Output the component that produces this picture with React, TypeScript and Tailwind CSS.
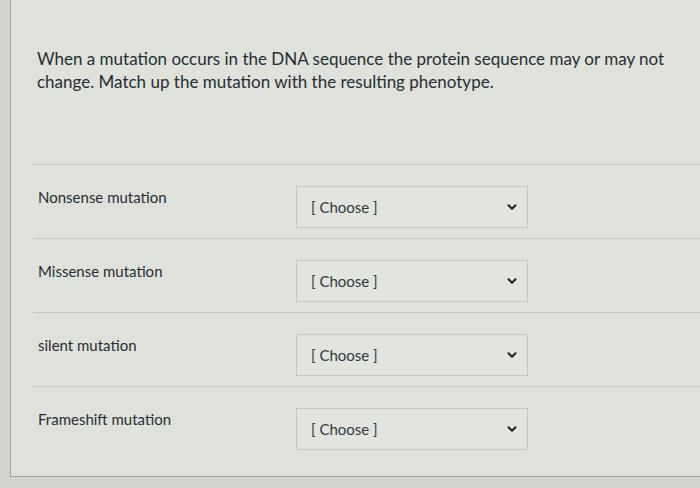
import { ChevronDown } from 'lucide-react';

const rows = ['Nonsense mutation', 'Missense mutation', 'silent mutation', 'Frameshift mutation'];

function ChooseSelect() {
  return (
    <div className="mt-[21px] flex h-[42px] w-[232px] items-center justify-between border border-[#c3c7c0] bg-[#e2e5de] pl-[14px] pr-[8px] text-[15px] text-[#2f3a3f]">
      <span>[ Choose ]</span>
      <ChevronDown size={14} strokeWidth={3.5} className="text-[#222]" />
    </div>
  );
}

export default function App() {
  return (
    <div
      className="h-[488px] w-[700px] overflow-hidden bg-[#d2d5ce]"
      style={{ fontFamily: 'Lato, "Open Sans", sans-serif' }}
    >
      <div className="ml-[10px] h-[477px] w-[690px] border-b border-l border-[#9ea29b] bg-[#dfe2db]">
        <p className="w-[680px] pl-[26px] pt-[47px] text-[17px] leading-[23px] text-[#262e33]">
          When a mutation occurs in the DNA sequence the protein sequence may or may not change. Match up the
          mutation with the resulting phenotype.
        </p>
        <div className="ml-[22px] mt-[71px]">
          {rows.map((label) => (
            <div key={label} className="flex h-[74px] border-t border-[#c6cac3]">
              <div className="w-[263px] pl-[5px] pt-[22px] text-[15px] leading-[20px] text-[#262e33]">{label}</div>
              <ChooseSelect />
            </div>
          ))}
        </div>
      </div>
    </div>
  );
}
